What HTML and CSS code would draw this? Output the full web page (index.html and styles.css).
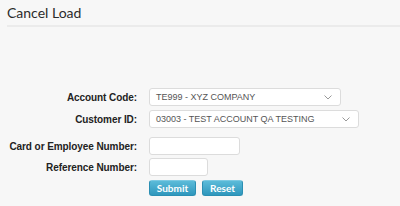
FILE: index.html
```html
<!DOCTYPE html>
<html>
<head>
<meta charset="utf-8">
<link rel="stylesheet" href="styles.css">
</head>
<body>
<div class="header"><h1 class="title">Cancel Load</h1></div>
<form class="form">
  <div class="row">
    <label class="label">Account Code:</label>
    <div class="select select-account"><span>TE999 - XYZ COMPANY</span><svg class="chev" width="8" height="5" viewBox="0 0 8 5"><path d="M0.5 0.5 L4 4 L7.5 0.5" fill="none" stroke="#999" stroke-width="1"/></svg></div>
  </div>
  <div class="row">
    <label class="label">Customer ID:</label>
    <div class="select select-customer"><span>03003 - TEST ACCOUNT QA TESTING</span><svg class="chev" width="8" height="5" viewBox="0 0 8 5"><path d="M0.5 0.5 L4 4 L7.5 0.5" fill="none" stroke="#999" stroke-width="1"/></svg></div>
  </div>
  <div class="row row-gap">
    <label class="label">Card or Employee Number:</label>
    <input class="input input-card" type="text">
  </div>
  <div class="row row-ref">
    <label class="label">Reference Number:</label>
    <input class="input input-ref" type="text">
  </div>
  <div class="row buttons">
    <span class="label"></span>
    <button type="button" class="btn btn-submit">Submit</button>
    <button type="button" class="btn btn-reset">Reset</button>
  </div>
</form>
</body>
</html>
```
FILE: styles.css
```css
html, body {
  margin: 0;
  padding: 0;
  background: #f7f7f7;
  width: 400px;
  height: 206px;
  overflow: hidden;
}
.header {
  margin-left: 7px;
  border-bottom: 2px solid #ebebeb;
  height: 27px;
  box-sizing: border-box;
}
.title {
  margin: 0;
  padding-top: 4px;
  font-family: "Lato", sans-serif;
  font-weight: 400;
  font-size: 14px;
  line-height: 18px;
  color: #2b2b2b;
}
.form {
  margin: 61px 0 0 0;
  display: flex;
  flex-direction: column;
  gap: 4px;
}
.row {
  display: flex;
  align-items: center;
  height: 18px;
}
.row-gap { margin-top: 5px; }
.row-ref { margin-top: -1px; }
.label {
  width: 137px;
  margin-right: 12px;
  text-align: right;
  white-space: nowrap;
  font-family: "Liberation Sans", Arial, sans-serif;
  font-weight: bold;
  font-size: 10px;
  letter-spacing: -0.08px;
  color: #222;
  flex: none;
}
.select {
  box-sizing: border-box;
  height: 18px;
  background: #fff;
  border: 1px solid #dcdcdc;
  border-radius: 3px;
  display: flex;
  align-items: center;
  justify-content: space-between;
  padding: 0 8px 0 6px;
  font-family: "Liberation Sans", Arial, sans-serif;
  font-size: 9px;
  color: #555;
}
.select-account { width: 192px; }
.select-customer { width: 210px; }
.input {
  box-sizing: border-box;
  height: 18px;
  background: #fff;
  border: 1px solid #dcdcdc;
  border-radius: 3px;
  margin: 0;
  padding: 0;
}
.input-card { width: 91px; }
.input-ref { width: 59px; }
.buttons { height: 16px; }
.btn {
  box-sizing: border-box;
  height: 16px;
  padding: 0;
  border: 1px solid #2b8fb3;
  border-top-color: #7cc9e2;
  border-radius: 3px;
  background: linear-gradient(#5bbbd9, #2f97bd);
  color: #fff;
  font-family: "Lato", sans-serif;
  font-weight: bold;
  font-size: 10px;
  line-height: 14px;
  text-align: center;
}
.btn-submit { width: 47px; margin-right: 6px; }
.btn-reset { width: 41px; }
```
